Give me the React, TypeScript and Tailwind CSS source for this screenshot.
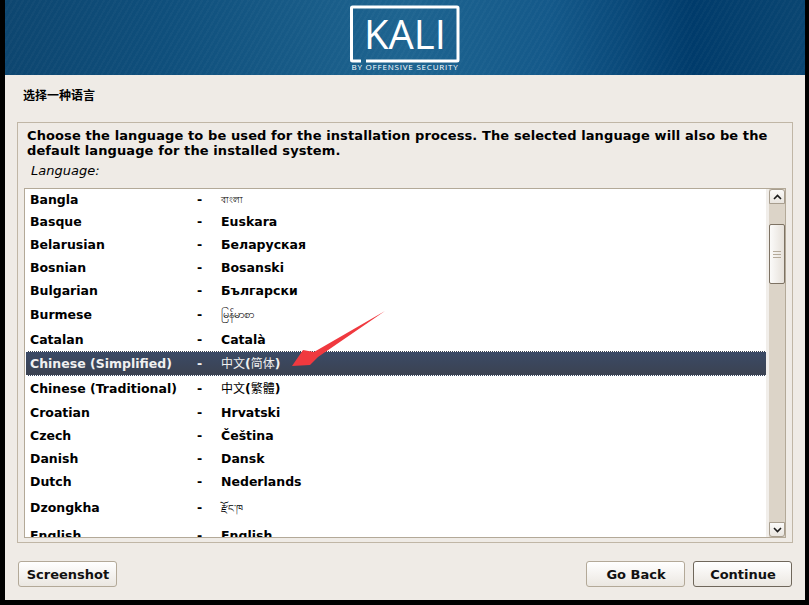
const rows: Array<{ name: string; native: string; h: number; nativeClass?: string; cjk?: [string, string]; selected?: boolean }> = [
  { name: "Bangla", native: "বাংলা", h: 21, nativeClass: "text-[9px] font-normal" },
  { name: "Basque", native: "Euskara", h: 23 },
  { name: "Belarusian", native: "Беларуская", h: 23 },
  { name: "Bosnian", native: "Bosanski", h: 23 },
  { name: "Bulgarian", native: "Български", h: 23 },
  { name: "Burmese", native: "မြန်မာစာ", h: 25, nativeClass: "text-[11px] font-normal" },
  { name: "Catalan", native: "Català", h: 24 },
  { name: "Chinese (Simplified)", native: "", h: 25, cjk: ["中文", "简体"], selected: true },
  { name: "Chinese (Traditional)", native: "", h: 24, cjk: ["中文", "繁體"] },
  { name: "Croatian", native: "Hrvatski", h: 24 },
  { name: "Czech", native: "Čeština", h: 23 },
  { name: "Danish", native: "Dansk", h: 23 },
  { name: "Dutch", native: "Nederlands", h: 23 },
  { name: "Dzongkha", native: "རྫོང་ཁ", h: 29, nativeClass: "text-[10px] font-normal" },
  { name: "English", native: "English", h: 26 },
];

function Banner() {
  return (
    <div className="relative h-[75px] flex justify-center bg-[repeating-linear-gradient(120deg,rgba(255,255,255,0.025)_0px,rgba(255,255,255,0.025)_2px,transparent_2px,transparent_5px),linear-gradient(90deg,#0d4670_0%,#0f4f7c_20%,#1e6490_50%,#14598a_68%,#003b6b_86%,#0a4672_100%)]">
      <div className="relative w-[110px] h-[75px] text-white">
        <svg className="absolute left-0 top-[5px]" width="110" height="58" viewBox="0 0 110 58" fill="none">
          <path
            d="M11 56 H2.5 Q1.5 56 1.5 55 V3 Q1.5 2 2.5 2 H107 Q108 2 108 3 V55 Q108 56 107 56 H16"
            stroke="#fff"
            strokeWidth="3"
          />
        </svg>
        <div className="absolute inset-x-0 top-[9px] text-center font-['Open_Sans',sans-serif] text-[40px] leading-[50px] font-medium">
          KALI
        </div>
        <div className="absolute inset-x-0 top-[61px] text-center font-['Open_Sans',sans-serif] text-[8px] leading-[11px] font-medium tracking-[0.8px] whitespace-nowrap">
          BY OFFENSIVE SECURITY
        </div>
      </div>
    </div>
  );
}

function ListRow({ name, native, h, nativeClass, cjk, selected }: (typeof rows)[number]) {
  return (
    <div
      style={{ height: h }}
      className={
        selected
          ? "shrink-0 ml-[1px] flex items-center pl-[4px] pt-[2px] border-y border-dotted border-white bg-gradient-to-b from-[#3b4a66] to-[#3b4251] text-[#f0f0f0]"
          : "shrink-0 ml-[1px] flex items-center pl-[4px] pt-[2px] text-black"
      }
    >
      <span className="w-[167px] whitespace-nowrap">{name}</span>
      <span className="w-[24px]">-</span>
      {cjk ? (
        <span className="whitespace-nowrap">
          <span className="text-[12px] font-normal">{cjk[0]}</span>(<span className="text-[12px] font-normal">{cjk[1]}</span>)
        </span>
      ) : (
        <span className={"whitespace-nowrap " + (nativeClass ?? "")}>{native}</span>
      )}
    </div>
  );
}

function Scrollbar() {
  return (
    <div className="w-[19px] shrink-0 flex flex-col bg-[#f1eeea] pl-[3px]">
      <div className="flex-1 flex flex-col bg-[#dcd4c8]">
        <div className="h-[15px] flex items-center justify-center rounded-t-[3px] border border-[#a89e8f] bg-gradient-to-b from-[#fbfaf9] to-[#e9e5df]">
          <svg width="9" height="6" viewBox="0 0 9 6">
            <path d="M1 5 L4.5 1.5 L8 5" fill="none" stroke="#1a1a1a" strokeWidth="1.6" />
          </svg>
        </div>
        <div className="h-[20px]" />
        <div className="h-[60px] flex flex-col items-center justify-center gap-[2px] rounded-[2px] border border-[#7d7263] bg-gradient-to-r from-[#fbfaf9] to-[#e6e1da]">
          <div className="w-[8px] h-[1px] bg-[#b5aa99]" />
          <div className="w-[8px] h-[1px] bg-[#b5aa99]" />
          <div className="w-[8px] h-[1px] bg-[#b5aa99]" />
        </div>
        <div className="flex-1" />
        <div className="h-[15px] flex items-center justify-center rounded-b-[3px] border border-[#a89e8f] bg-gradient-to-b from-[#fbfaf9] to-[#e9e5df]">
          <svg width="9" height="6" viewBox="0 0 9 6">
            <path d="M1 1 L4.5 4.5 L8 1" fill="none" stroke="#1a1a1a" strokeWidth="1.6" />
          </svg>
        </div>
      </div>
    </div>
  );
}

function WizardButton({ label, dark }: { label: string; dark?: boolean }) {
  return (
    <button
      className={
        (dark ? "border-[#6f675b] " : "border-[#b3a998] ") +
        "h-[26px] w-[99px] pt-[1px] pl-[1px] rounded-[3px] border bg-gradient-to-b from-[#ffffff] to-[#ebe7e1] text-center text-[13px] font-bold text-[#111]"
      }
    >
      {label}
    </button>
  );
}

export default function App() {
  return (
    <div className="relative h-[605px] w-[809px] bg-black pl-[5px] pr-[4px] pb-[5px] font-['DejaVu_Sans','Noto_Sans_CJK_SC',sans-serif] text-[13px] font-bold overflow-hidden">
      <div className="h-full flex flex-col bg-[#efebe6]">
        <Banner />
        <h1 className="h-[47px] pl-[18px] pb-[7px] flex items-center text-[12px] font-bold text-black font-['Noto_Sans_CJK_SC',sans-serif]">
          选择一种语言
        </h1>
        <div className="h-[421px] mx-[12px] flex flex-col border border-[#c0b6a6] px-[6px] pb-[4px]">
          <p className="pt-[5px] pl-[3px] leading-[15px] text-[13px] text-black tracking-[0.1px]">
            Choose the language to be used for the installation process. The selected language will also be the default
            language for the installed system.
          </p>
          <p className="pl-[7px] pt-[6px] h-[25px] text-[13px] font-normal italic text-black leading-[14px]">Language:</p>
          <div className="mt-[5px] flex-1 min-h-0 flex border border-[#b3a998] bg-white text-[12.5px]">
            <div className="flex-1 min-w-0 flex flex-col overflow-hidden">
              {rows.map((row) => (
                <ListRow key={row.name} {...row} />
              ))}
            </div>
            <Scrollbar />
          </div>
        </div>
        <div className="flex-1 flex items-end px-[13px] pb-[13px]">
          <WizardButton label="Screenshot" />
          <div className="flex-1" />
          <div className="flex gap-[8px]">
            <WizardButton label="Go Back" />
            <WizardButton label="Continue" dark />
          </div>
        </div>
      </div>
      {/* red annotation arrow over the selected row */}
      <svg className="absolute left-0 top-0 pointer-events-none" width="809" height="605">
        <polygon points="385,311 314,352 303,350 292,366 310,365 318,357" fill="#f0393f" />
      </svg>
    </div>
  );
}
